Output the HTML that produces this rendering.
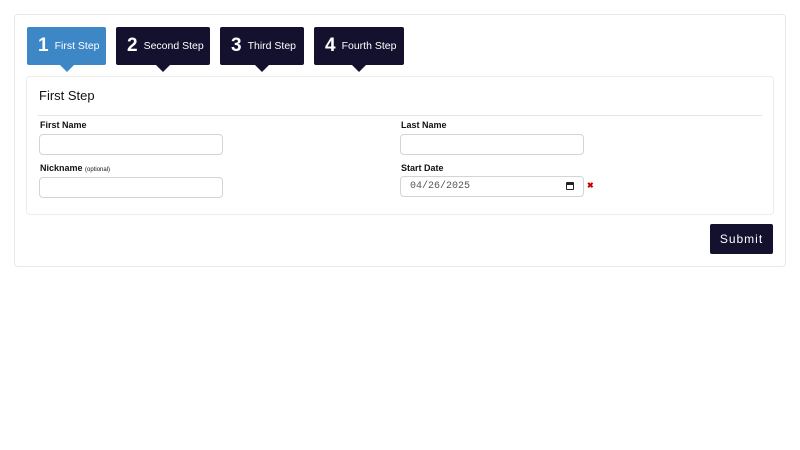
<!DOCTYPE html><html><head><style>
*{box-sizing:border-box;margin:0;padding:0}
body{width:800px;height:450px;background:#fff;font-family:"Liberation Sans",sans-serif;position:relative;overflow:hidden}
.a{position:absolute}
.outer{left:14px;top:14px;width:772px;height:253px;border:1px solid #e8e8e8;border-radius:4px}
.tab{top:27px;height:38px;background:#14112e;color:#fff;border-radius:2px;display:flex;align-items:center;padding-left:11px;font-size:10.5px}
.tab b{font-size:19px;font-weight:bold;margin-right:6px}
.tab:after{content:"";position:absolute;left:50%;margin-left:-7px;top:38px;border:7px solid transparent;border-top-color:inherit;border-bottom:0}
.panel{left:26px;top:76px;width:748px;height:139px;border:1px solid #ececec;border-radius:4px}
.lbl{font-size:9px;font-weight:bold;color:#111}
.in{width:184px;height:21px;border:1px solid #d4d4d4;border-radius:4px;background:#fff}
</style></head><body>
<div class="a outer"></div>
<div class="a tab" style="left:27px;width:79px;background:#3d87c7;border-top-color:#3d87c7"><b>1</b>First Step</div>
<div class="a tab" style="left:116px;width:94px;border-top-color:#14112e"><b>2</b>Second Step</div>
<div class="a tab" style="left:220px;width:84px;border-top-color:#14112e"><b>3</b>Third Step</div>
<div class="a tab" style="left:314px;width:90px;border-top-color:#14112e"><b>4</b>Fourth Step</div>
<div class="a panel"></div>
<div class="a" style="left:39px;top:88px;font-size:13px;color:#111">First Step</div>
<div class="a" style="left:38px;top:115px;width:724px;border-top:1px solid #e5e5e5"></div>
<div class="a lbl" style="left:40px;top:120px">First Name</div>
<div class="a in" style="left:39px;top:134px"></div>
<div class="a lbl" style="left:40px;top:163px">Nickname <span style="font-size:6px;font-weight:normal">(optional)</span></div>
<div class="a in" style="left:39px;top:177px"></div>
<div class="a lbl" style="left:401px;top:120px">Last Name</div>
<div class="a in" style="left:400px;top:134px"></div>
<div class="a lbl" style="left:401px;top:163px">Start Date</div>
<div class="a in" style="left:400px;top:176px;font-family:'Liberation Mono',monospace;font-size:10px;color:#555;padding:4px 0 0 9px">04/26/2025<span style="position:absolute;right:9px;top:5px;width:8px;height:8px;border:1.5px solid #222;border-top-width:3px;border-radius:1px"></span></div>
<div class="a" style="left:587px;top:181px;color:#c00;font-size:8px;font-weight:bold">✖</div>
<div class="a" style="left:710px;top:224px;width:63px;height:30px;background:#14112e;color:#fff;border-radius:2px;font-size:12px;letter-spacing:1px;text-align:center;line-height:30px">Submit</div>
</body></html>
